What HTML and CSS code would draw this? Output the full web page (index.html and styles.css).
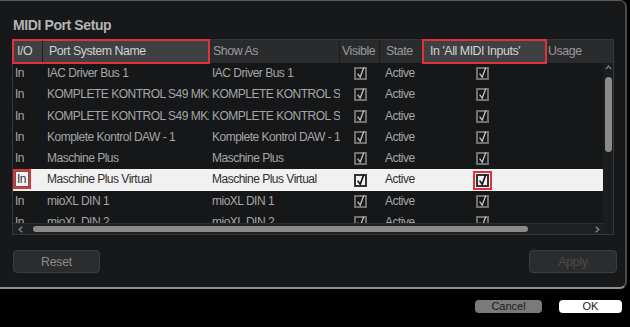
FILE: index.html
```html
<!DOCTYPE html>
<html>
<head>
<meta charset="utf-8">
<link rel="stylesheet" href="styles.css">
</head>
<body>
<svg class="defs" width="0" height="0">
  <symbol id="cb" viewBox="0 0 13 13">
    <rect x="1" y="1" width="11" height="11" fill="none" stroke="currentColor" stroke-width="2"/>
    <polyline points="3.6,6.6 6.2,10.2 9.8,0.6" fill="none" style="stroke: var(--tick); stroke-width: var(--tw)"/>
  </symbol>
</svg>
<div class="panel">
  <div class="title">MIDI Port Setup</div>
  <div class="table">
    <div class="thead">
      <div class="hl-group">
        <div class="th c-io hi">I/O</div>
        <div class="th c-name hi">Port System Name</div>
      </div>
      <div class="th c-show">Show As</div>
      <div class="th c-vis">Visible</div>
      <div class="th c-state">State</div>
      <div class="hl-group">
        <div class="th c-all hi">In 'All MIDI Inputs'</div>
      </div>
      <div class="th c-usage">Usage</div>
    </div>
    <div class="tbody">
      <div class="rows">
        <div class="row">
          <div class="td c-io">In</div>
          <div class="td c-name">IAC Driver Bus 1</div>
          <div class="td c-show">IAC Driver Bus 1</div>
          <div class="td c-vis"><svg class="cbx"><use href="#cb"/></svg></div>
          <div class="td c-state">Active</div>
          <div class="td c-all"><svg class="cbx"><use href="#cb"/></svg></div>
          <div class="td c-usage"></div>
        </div>
        <div class="row">
          <div class="td c-io">In</div>
          <div class="td c-name">KOMPLETE KONTROL S49 MK2 Port 1</div>
          <div class="td c-show">KOMPLETE KONTROL S49 MK2 Port 1</div>
          <div class="td c-vis"><svg class="cbx"><use href="#cb"/></svg></div>
          <div class="td c-state">Active</div>
          <div class="td c-all"><svg class="cbx"><use href="#cb"/></svg></div>
          <div class="td c-usage"></div>
        </div>
        <div class="row">
          <div class="td c-io">In</div>
          <div class="td c-name">KOMPLETE KONTROL S49 MK2 Port 2</div>
          <div class="td c-show">KOMPLETE KONTROL S49 MK2 Port 2</div>
          <div class="td c-vis"><svg class="cbx"><use href="#cb"/></svg></div>
          <div class="td c-state">Active</div>
          <div class="td c-all"><svg class="cbx"><use href="#cb"/></svg></div>
          <div class="td c-usage"></div>
        </div>
        <div class="row">
          <div class="td c-io">In</div>
          <div class="td c-name">Komplete Kontrol DAW - 1</div>
          <div class="td c-show">Komplete Kontrol DAW - 1</div>
          <div class="td c-vis"><svg class="cbx"><use href="#cb"/></svg></div>
          <div class="td c-state">Active</div>
          <div class="td c-all"><svg class="cbx"><use href="#cb"/></svg></div>
          <div class="td c-usage"></div>
        </div>
        <div class="row">
          <div class="td c-io">In</div>
          <div class="td c-name">Maschine Plus</div>
          <div class="td c-show">Maschine Plus</div>
          <div class="td c-vis"><svg class="cbx"><use href="#cb"/></svg></div>
          <div class="td c-state">Active</div>
          <div class="td c-all"><svg class="cbx"><use href="#cb"/></svg></div>
          <div class="td c-usage"></div>
        </div>
        <div class="row selected">
          <div class="td c-io"><span class="io-mark">In</span></div>
          <div class="td c-name">Maschine Plus Virtual</div>
          <div class="td c-show">Maschine Plus Virtual</div>
          <div class="td c-vis"><svg class="cbx"><use href="#cb"/></svg></div>
          <div class="td c-state">Active</div>
          <div class="td c-all"><svg class="cbx marked"><use href="#cb"/></svg></div>
          <div class="td c-usage"></div>
        </div>
        <div class="row">
          <div class="td c-io">In</div>
          <div class="td c-name">mioXL DIN 1</div>
          <div class="td c-show">mioXL DIN 1</div>
          <div class="td c-vis"><svg class="cbx"><use href="#cb"/></svg></div>
          <div class="td c-state">Active</div>
          <div class="td c-all"><svg class="cbx"><use href="#cb"/></svg></div>
          <div class="td c-usage"></div>
        </div>
        <div class="row">
          <div class="td c-io">In</div>
          <div class="td c-name">mioXL DIN 2</div>
          <div class="td c-show">mioXL DIN 2</div>
          <div class="td c-vis"><svg class="cbx"><use href="#cb"/></svg></div>
          <div class="td c-state">Active</div>
          <div class="td c-all"><svg class="cbx"><use href="#cb"/></svg></div>
          <div class="td c-usage"></div>
        </div>
      </div>
      <div class="vscroll">
        <svg class="arrow-up" width="7" height="5" viewBox="0 0 7 5"><polyline points="0.8,4.2 3.5,1.2 6.2,4.2" fill="none" stroke="#8a8a8a" stroke-width="1.2"/></svg>
        <div class="vthumb"></div>
      </div>
    </div>
    <div class="hscroll-row">
      <div class="hscroll">
        <svg class="arrow-l" width="5" height="7" viewBox="0 0 5 7"><polyline points="4.2,0.8 1.2,3.5 4.2,6.2" fill="none" stroke="#8a8a8a" stroke-width="1.2"/></svg>
        <div class="hthumb"></div>
        <svg class="arrow-r" width="5" height="7" viewBox="0 0 5 7"><polyline points="0.8,0.8 3.8,3.5 0.8,6.2" fill="none" stroke="#8a8a8a" stroke-width="1.2"/></svg>
      </div>
      <div class="corner"></div>
    </div>
  </div>
  <div class="actions">
    <button class="btn">Reset</button>
    <button class="btn disabled">Apply</button>
  </div>
</div>
<div class="footer">
  <button class="fbtn cancel">Cancel</button>
  <button class="fbtn ok">OK</button>
</div>
</body>
</html>
```
FILE: styles.css
```css
html, body {
  margin: 0;
  padding: 0;
  background: #000;
  font-family: "Liberation Sans", Arial, sans-serif;
}
.defs { position: absolute; width: 0; height: 0; }

.panel {
  box-sizing: border-box;
  width: 627px;
  height: 289px;
  background: #17181a;
  border-top: 1px solid #5a5a5a;
  border-right: 2px solid #4a4a4a;
  border-bottom: 2px solid #8f8f8f;
  border-radius: 0 7px 7px 0;
  padding: 0 11px 0 12px;
  display: flex;
  flex-direction: column;
}
.title {
  margin: 16px 0 6px 1px;
  height: 16px;
  line-height: 16px;
  font-size: 14px;
  font-weight: bold;
  letter-spacing: -0.4px;
  color: #b3b3b3;
}
.table {
  width: 602px;
  box-sizing: border-box;
  border: 1px solid #36373a;
  background: #161719;
  display: flex;
  flex-direction: column;
}
.thead {
  display: flex;
  height: 23px;
  background: #2a2b2d;
}
.hl-group {
  display: flex;
  outline: 2px solid #e3313c;
  outline-offset: -1px;
  position: relative;
  z-index: 1;
}
.th {
  box-sizing: border-box;
  height: 23px;
  line-height: 23px;
  font-size: 12.4px;
  letter-spacing: -0.45px;
  color: #9a9a9a;
  border-right: 1px solid #1c1d1f;
  white-space: nowrap;
  overflow: hidden;
}
.th.hi { background: #3e4042; color: #d2d2d2; }

.c-io { width: 30px; }
.c-name { width: 166px; }
.c-show { width: 131px; }
.c-vis { width: 40px; }
.c-state { width: 43px; }
.c-all { width: 123px; }
.c-usage { width: 57px; }
.th.c-usage { width: 67px; border-right: none; }

.th.c-io { padding-left: 4px; }
.th.c-name { padding-left: 6px; }
.th.c-show { padding-left: 4px; }
.th.c-vis { padding-left: 2px; }
.th.c-state { padding-left: 6px; }
.th.c-all { padding-left: 7px; }
.th.c-usage { padding-left: 2px; }

.tbody {
  display: flex;
  height: 160px;
}
.rows {
  flex: 1;
  overflow: hidden;
}
.row {
  display: flex;
  height: 21.3px;
  line-height: 21.3px;
  font-size: 12px;
  letter-spacing: -0.5px;
  color: #a6a6a6;
  --tick: #c4c4c4;
  --tw: 1.3;
}
.row.selected {
  background: #f1f1f1;
  color: #2e2e2e;
  --tick: #111;
  --tw: 1.6;
}
.td {
  box-sizing: border-box;
  white-space: nowrap;
  overflow: hidden;
}
.td.c-io { padding-left: 2px; overflow: visible; }
.td.c-name { padding-left: 4px; }
.td.c-show { padding-left: 3px; }
.td.c-state { padding-left: 5px; }
.td.c-vis, .td.c-all {
  display: flex;
  align-items: center;
  justify-content: center;
  overflow: visible;
}
.td.c-all { padding-right: 5px; }

.cbx {
  width: 13px;
  height: 13px;
  color: #707070;
  overflow: visible;
}
.row.selected .cbx { color: #333; }
.cbx.marked {
  outline: 2px solid #e3313c;
  outline-offset: 1px;
}
.io-mark {
  display: inline-block;
  line-height: 14px;
  padding: 0 2px 0 1px;
  border: 1px solid #5c5c5c;
  outline: 2px solid #e3313c;
  outline-offset: 0;
  color: #333;
}

.vscroll {
  width: 10px;
  background: #1c1d1f;
  display: flex;
  flex-direction: column;
  align-items: center;
}
.arrow-up { margin-top: 2px; display: block; }
.vthumb {
  margin-top: 7px;
  width: 7px;
  height: 75px;
  border-radius: 3.5px;
  background: #8a8a8a;
}

.hscroll-row {
  display: flex;
  height: 11px;
}
.hscroll {
  flex: 1;
  box-sizing: border-box;
  background: #1f2022;
  border-top: 1px solid #2c2d2f;
  display: flex;
  align-items: center;
  padding-left: 5px;
}
.arrow-l, .arrow-r { display: block; }
.hthumb {
  margin-left: 10px;
  width: 495px;
  height: 6px;
  border-radius: 3px;
  background: #8a8a8a;
}
.arrow-r { margin-left: 67px; }
.corner {
  width: 10px;
  background: #1c1d1f;
}

.actions {
  display: flex;
  justify-content: space-between;
  margin-top: 15px;
  padding-left: 1px;
  width: 604px;
}
.btn {
  box-sizing: border-box;
  width: 87px;
  height: 23px;
  background: #2b2c2e;
  border: 1px solid #3b3c3e;
  border-radius: 4px;
  font-family: "Liberation Sans", Arial, sans-serif;
  font-size: 12.4px;
  letter-spacing: -0.3px;
  color: #8a8a8a;
  padding: 0;
}
.btn.disabled { width: 88px; color: #4b4b4b; }

.footer {
  display: flex;
  justify-content: flex-end;
  gap: 17px;
  padding: 11px 8px 0 0;
}
.fbtn {
  box-sizing: border-box;
  height: 13px;
  border: none;
  border-radius: 4px;
  font-family: "Liberation Sans", Arial, sans-serif;
  font-size: 11px;
  line-height: 13px;
  padding: 0;
  color: #1a1a1a;
}
.cancel { width: 67px; background: #7a7a7a; }
.ok { width: 63px; background: #fff; }
```
